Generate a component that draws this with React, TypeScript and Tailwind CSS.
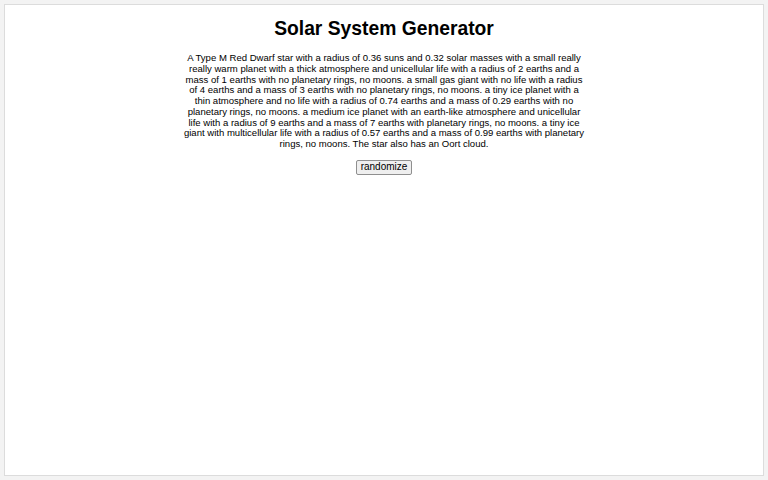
import React from "react";

const text =
  "A Type M Red Dwarf star with a radius of 0.36 suns and 0.32 solar masses with a small really really warm planet with a thick atmosphere and unicellular life with a radius of 2 earths and a mass of 1 earths with no planetary rings, no moons. a small gas giant with no life with a radius of 4 earths and a mass of 3 earths with no planetary rings, no moons. a tiny ice planet with a thin atmosphere and no life with a radius of 0.74 earths and a mass of 0.29 earths with no planetary rings, no moons. a medium ice planet with an earth-like atmosphere and unicellular life with a radius of 9 earths and a mass of 7 earths with planetary rings, no moons. a tiny ice giant with multicellular life with a radius of 0.57 earths and a mass of 0.99 earths with planetary rings, no moons. The star also has an Oort cloud.";

export default function App() {
  return (
    <div
      className="w-[768px] h-[480px] bg-[#f3f3f3] p-[4px] text-black"
      style={{ fontFamily: '"Liberation Sans", Arial, sans-serif' }}
    >
      <div className="h-full bg-white border border-[#dcdcdc] flex flex-col items-center">
        <h1 className="mt-[12px] text-[19.3px] leading-[23px] font-bold">Solar System Generator</h1>
        <p className="mt-[13px] w-[402px] text-center text-[9.55px] leading-[10.75px]">{text}</p>
        <button className="mt-[10px] h-[15px] px-[4px] text-[10px] leading-[12px] bg-[#efefef] border border-[#8f8f8f] rounded-[2px]">
          randomize
        </button>
      </div>
    </div>
  );
}
